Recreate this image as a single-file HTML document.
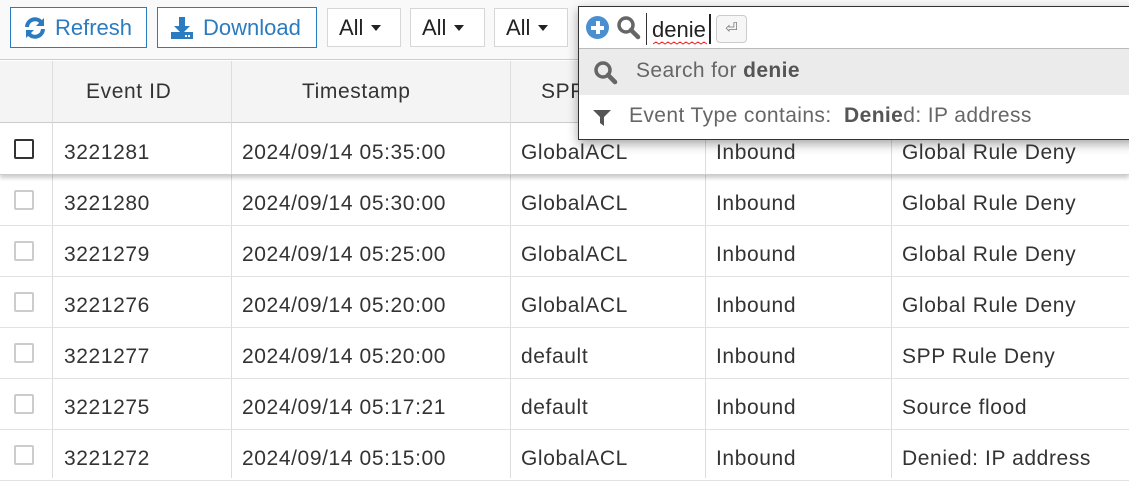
<!DOCTYPE html>
<html><head><meta charset="utf-8"><style>
*{box-sizing:border-box;margin:0;padding:0}
body{width:1129px;height:478px;overflow:hidden;background:#fff;font-family:"Liberation Sans",sans-serif;color:#333;position:relative}
.tb{position:absolute;left:0;top:0;width:1129px;height:60px;background:#f9f9f9;border-bottom:1px solid #ccc}
.btn{position:absolute;top:7px;height:41px;border:1px solid #2b7bc0;background:#fff;color:#2b7bc0;font-size:22px;display:flex;align-items:center;padding-left:12px}
.sel{position:absolute;top:8px;height:39px;border:1px solid #d6d6d6;background:#fff;font-size:22px;display:flex;align-items:center;padding-left:11px;color:#222}
.sel:after{content:"";border-left:5px solid transparent;border-right:5px solid transparent;border-top:6px solid #222;margin-left:8px}
.hd{position:absolute;top:61px;left:0;width:1129px;height:62px;background:#f4f4f4;border-bottom:1px solid #ccc}
.c{position:absolute;font-size:21px;letter-spacing:.6px;display:flex;align-items:center;padding-top:6px}
.vl{position:absolute;width:1px;background:#ddd}
.row{position:absolute;left:0;width:1129px;height:51px;border-bottom:1px solid #e2e2e2}
.cb{position:absolute;left:14px;width:20px;height:20px;border:2px solid #ccc;border-radius:2px}
.dd{position:absolute;left:578px;top:6px;width:560px;height:134px;background:#fff;border:1px solid #333;box-shadow:0 4px 10px rgba(0,0,0,.35)}
</style></head><body>
<div class="tb"></div>
<div class="btn" style="left:10px;width:137px">
<svg width="24" height="24" viewBox="0 0 24 24" style="margin-right:8px"><path d="M4 11A8 8 0 0 1 18 6" fill="none" stroke="#2b7bc0" stroke-width="4"/><path d="M21 2v8h-8z" fill="#2b7bc0"/><path d="M20 13A8 8 0 0 1 6 18" fill="none" stroke="#2b7bc0" stroke-width="4"/><path d="M3 22v-8h8z" fill="#2b7bc0"/></svg>Refresh</div>
<div class="btn" style="left:157px;width:160px">
<svg width="24" height="24" viewBox="0 0 24 24" style="margin-right:9px"><path d="M9 1h6v9h5l-8 8-8-8h5z" fill="#2b7bc0"/><rect x="1" y="16" width="22" height="7" fill="#2b7bc0"/><rect x="15" y="19" width="2" height="2" fill="#fff"/><rect x="18" y="19" width="2" height="2" fill="#fff"/></svg>Download</div>
<div class="sel" style="left:327px;width:74px">All</div>
<div class="sel" style="left:410px;width:75px">All</div>
<div class="sel" style="left:494px;width:74px">All</div>

<div class="hd"></div>
<div class="c" style="left:86px;top:61px;height:62px;padding-top:0">Event ID</div>
<div class="c" style="left:302px;top:61px;height:62px;padding-top:0">Timestamp</div>
<div class="c" style="left:541px;top:61px;height:62px;padding-top:0">SPP</div>

<div class="vl" style="left:52px;top:61px;height:417px"></div>
<div class="vl" style="left:231px;top:61px;height:417px"></div>
<div class="vl" style="left:510px;top:61px;height:417px"></div>
<div class="vl" style="left:705px;top:124px;height:354px"></div>
<div class="vl" style="left:891px;top:124px;height:354px"></div>

<div class="row" style="top:124px;box-shadow:0 3px 4px rgba(0,0,0,.2);z-index:1;border-bottom:1px solid #ccc"></div>
<div id="rows"></div>
<div class="cb" style="top:139px;border-color:#333;z-index:2"></div>

<div class="dd">
<div style="position:absolute;left:7px;top:9px;width:23px;height:23px;border-radius:50%;background:#4a8fd0"></div>
<div style="position:absolute;left:17px;top:14px;width:3.5px;height:13px;background:#fff"></div>
<div style="position:absolute;left:12px;top:19px;width:13px;height:3.5px;background:#fff"></div>
<svg style="position:absolute;left:37px;top:8px" width="26" height="26" viewBox="0 0 26 26"><circle cx="10" cy="10" r="7" fill="none" stroke="#666" stroke-width="3.5"/><path d="M15 15l7 7" stroke="#666" stroke-width="4.5" stroke-linecap="round"/></svg>
<div style="position:absolute;left:67px;top:6px;width:1px;height:32px;background:#333"></div>
<div style="position:absolute;left:73px;top:7px;font-size:22px;color:#222;line-height:32px">denie</div>
<svg style="position:absolute;left:74px;top:34px" width="56" height="5" viewBox="0 0 56 5"><path d="M0 3l3-2 3 2 3-2 3 2 3-2 3 2 3-2 3 2 3-2 3 2 3-2 3 2 3-2 3 2 3-2 3 2 3-2 3 2" fill="none" stroke="#e22" stroke-width="1"/></svg>
<div style="position:absolute;left:130px;top:7px;width:2px;height:30px;background:#222"></div>
<div style="position:absolute;left:137px;top:8px;width:31px;height:28px;border:1px solid #ccc;border-radius:4px;background:#f6f6f6;color:#777;font-size:15px;text-align:center;line-height:26px">⏎</div>
<div style="position:absolute;left:0;top:41px;width:560px;height:47px;background:#ebebeb;border-top:1px solid #bbb"></div>
<svg style="position:absolute;left:14px;top:53px" width="26" height="26" viewBox="0 0 26 26"><circle cx="10" cy="10" r="7" fill="none" stroke="#666" stroke-width="3.5"/><path d="M15 15l7 7" stroke="#666" stroke-width="4.5" stroke-linecap="round"/></svg>
<div style="position:absolute;left:57px;top:52px;font-size:21px;letter-spacing:.4px;color:#666">Search for <b style="color:#555">denie</b></div>
<svg style="position:absolute;left:13px;top:102px" width="20" height="18" viewBox="0 0 20 18"><path d="M1 1h18l-7 7v9l-4-3v-6z" fill="#555"/></svg>
<div style="position:absolute;left:50px;top:97px;font-size:21px;letter-spacing:.4px;color:#666">Event Type contains:&nbsp; <b style="color:#555">Denie</b>d: IP address</div>
</div>

<script>
var d=[["3221281","2024/09/14 05:35:00","GlobalACL","Inbound","Global Rule Deny"],
["3221280","2024/09/14 05:30:00","GlobalACL","Inbound","Global Rule Deny"],
["3221279","2024/09/14 05:25:00","GlobalACL","Inbound","Global Rule Deny"],
["3221276","2024/09/14 05:20:00","GlobalACL","Inbound","Global Rule Deny"],
["3221277","2024/09/14 05:20:00","default","Inbound","SPP Rule Deny"],
["3221275","2024/09/14 05:17:21","default","Inbound","Source flood"],
["3221272","2024/09/14 05:15:00","GlobalACL","Inbound","Denied: IP address"]];
var x=[64,242,521,716,902],h="";
d.forEach(function(r,i){var t=124+i*51;
if(i>0)h+='<div class="row" style="top:'+t+'px"></div><div class="cb" style="top:'+(t+15)+'px"></div>';
r.forEach(function(v,j){h+='<div class="c" style="z-index:2;left:'+x[j]+'px;top:'+t+'px;height:51px">'+v+'</div>'});});
document.getElementById('rows').innerHTML=h;
</script>
</body></html>
